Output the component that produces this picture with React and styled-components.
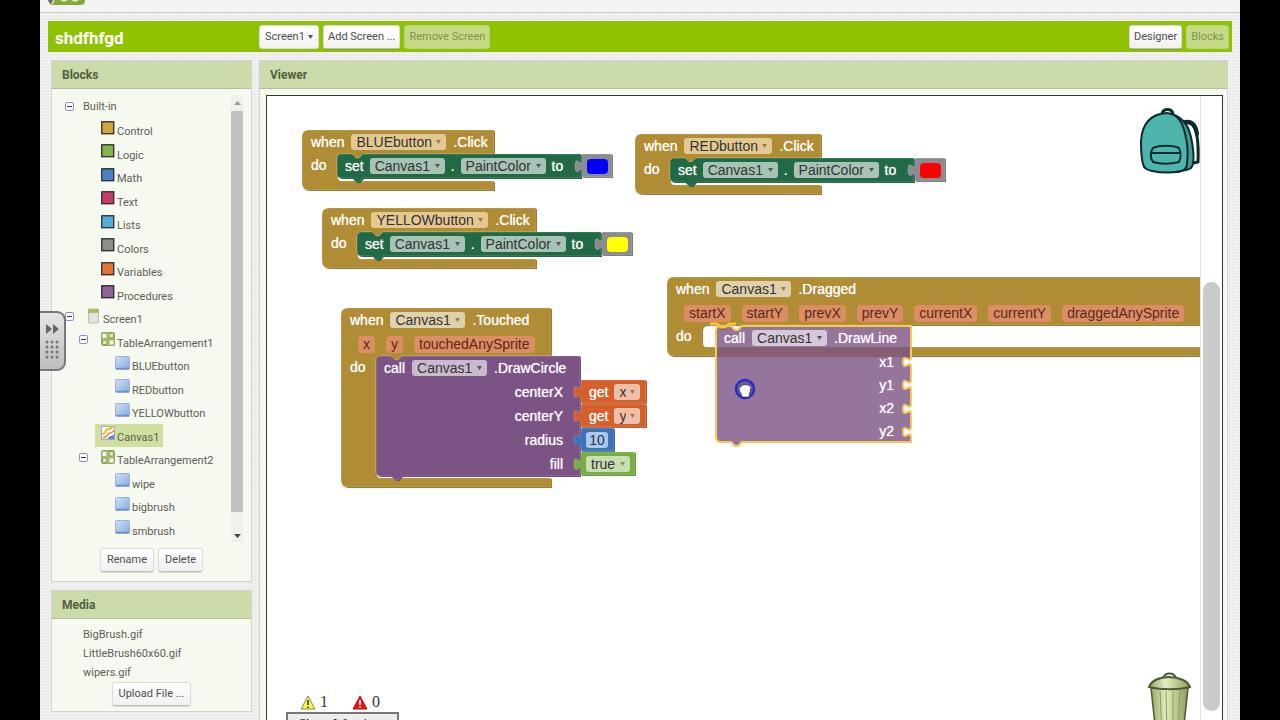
import React from 'react';
import styled, { createGlobalStyle } from 'styled-components';

const GlobalStyle = createGlobalStyle`
  * {
    box-sizing: border-box;
  }

  body {
    margin: 0;
    background: #000;
    font-family: Roboto, sans-serif;
    font-size: 11px;
    color: #5c6057;
  }

  svg {
    display: block;
  }

  button,
  select {
    font-family: inherit;
    margin: 0;
  }

  ul {
    list-style: none;
    margin: 0;
    padding: 0;
  }
`;

const GOLD = '#b08c34';
const GREEN = '#226a46';
const PURPLE = '#7c5385';
const ORANGE = '#d6602b';
const BLUE = '#3d71b8';
const LIME = '#78ad42';
const GRAY = '#8b8c91';

const Shell = styled.div`
  position: relative;
  height: 100vh;
  margin: 0 40px;
  overflow: hidden;
  background-color: #e9e9e9;
  background-image: repeating-linear-gradient(0deg, rgba(255, 255, 255, 0.35) 0 1px, transparent 1px 3px),
    repeating-linear-gradient(90deg, rgba(255, 255, 255, 0.35) 0 1px, transparent 1px 3px);
`;

const TopStrip = styled.header`
  height: 13px;
  padding-left: 8px;
  background: #f3f3f3;
  border-bottom: 1px solid #cfcfcf;
`;

const ProjectBar = styled.div`
  display: flex;
  align-items: center;
  height: 31px;
  margin: 8px 8px 0;
  padding: 0 3px 0 7px;
  background: #8fc202;
`;

const ProjectName = styled.h1`
  flex: 0 0 204px;
  margin: 0;
  padding-top: 3px;
  font-size: 17px;
  line-height: 24px;
  font-weight: 700;
  color: #fff;
`;

const BarGroup = styled.div`
  display: flex;
  gap: 4px;
  margin-left: ${props => (props.$end ? 'auto' : '0')};
`;

const Button = styled.button`
  height: 24px;
  padding: 0 ${props => (props.$small ? '4px' : '6px')};
  font-size: 11px;
  line-height: 20px;
  white-space: nowrap;
  color: #4f4f4f;
  background: linear-gradient(#fff, #f1f1f1);
  border: 1px solid #dcdcdc;
  border-bottom-color: #bfbfbf;
  border-radius: 3px;
  box-shadow: 0 1px 1px rgba(0, 0, 0, 0.12);

  &:disabled {
    color: #7d9453;
    background: #c4da85;
    border-color: #b9d36f;
    box-shadow: none;
  }
`;

const ScreenPicker = styled.label`
  display: flex;
  align-items: center;
  gap: 3px;
  height: 24px;
  padding: 0 5px;
  background: linear-gradient(#fff, #f1f1f1);
  border: 1px solid #dcdcdc;
  border-radius: 3px;

  select {
    height: 20px;
    padding: 0;
    font-size: 11px;
    color: #4f4f4f;
    background: none;
    border: 0;
    appearance: none;
  }
`;

const Columns = styled.main`
  display: flex;
  align-items: flex-start;
  gap: 7px;
  padding: 8px 12px 0 11px;
`;

const Sidebar = styled.aside`
  display: flex;
  flex: 0 0 201px;
  flex-direction: column;
  gap: 8px;
`;

const Panel = styled.section`
  flex: ${props => (props.$grow ? '1' : 'none')};
  min-width: 0;
  background: #f6f9f0;
  border: 1px solid #d2d6ca;
`;

const PanelTitle = styled.h2`
  margin: 0;
  padding: 0 10px;
  height: 28px;
  font-size: 12px;
  line-height: 28px;
  font-weight: 700;
  color: #52603f;
  background: #cbdba9;
  border-bottom: 1px solid #b4bda2;
`;

const TreeArea = styled.div`
  display: flex;
  height: 454px;
  padding: 6px 8px 0 0;
`;

const Tree = styled.div`
  flex: 1;
`;

const TreeList = styled.ul`
  display: flex;
  flex-direction: column;
  height: 423px;
`;

const TreeRow = styled.li`
  display: flex;
  flex: 1;
  align-items: center;
  height: 23px;
  padding-left: ${props => 13 + props.$depth * 14}px;
`;

const RootRow = styled.div`
  display: flex;
  align-items: center;
  gap: 9px;
  height: 22px;
  margin-bottom: 1px;
  padding-left: 13px;
`;

const Toggle = styled.button`
  flex: none;
  width: 9px;
  height: 9px;
  padding: 0;
  background: #fff;
  border: 1px solid #8b8fc4;
  border-radius: 2px;

  &::after {
    content: '';
    display: block;
    width: 5px;
    height: 1px;
    margin: 0 auto;
    background: #30308a;
  }
`;

const ToggleSlot = styled.span`
  display: flex;
  flex: 0 0 9px;
  margin-right: 7px;
  padding-bottom: 3px;
`;

const Node = styled.span`
  display: flex;
  align-items: center;
  align-self: stretch;
  gap: 2px;
  padding: 0 4px 0 6px;
  background: ${props => (props.$selected ? '#cfdf9f' : 'transparent')};

  svg {
    margin-bottom: 4px;
  }

  span {
    padding-top: 4px;
  }
`;

const ScrollBar = styled.div`
  display: flex;
  flex: 0 0 12px;
  flex-direction: column;
  align-items: center;
  justify-content: space-between;
  height: 447px;
  padding: 6px 0 4px;
  background: #f0f1ef;
`;

const ScrollThumb = styled.div`
  width: 12px;
  height: 401px;
  margin: 6px 0 auto;
  background: #c1c2c1;
`;

const ButtonRow = styled.div`
  display: flex;
  justify-content: center;
  gap: 4px;
  padding: ${props => (props.$tight ? '0 0 5px' : '5px 0 9px')};
`;

const FileList = styled.ul`
  padding: 6px 31px 0;

  li {
    height: 19px;
    line-height: 19px;
  }
`;

const Workspace = styled.div`
  display: flex;
  min-height: 660px;
  margin: 6px 4px 6px 6px;
  background: #fff;
  border: 1px solid #333;
`;

const Surface = styled.div`
  position: relative;
  flex: 1;
  min-width: 0;
  overflow: hidden;
  font-family: 'Liberation Sans', sans-serif;
  font-size: 14px;
`;

const SurfaceScroll = styled.div`
  flex: 0 0 22px;
  padding: 186px 2px 0;
  border-left: 1px solid #e4e4e4;

  div {
    height: 429px;
    border-radius: 9px;
    background: #cacaca;
  }
`;

const TopBlock = styled.div`
  position: absolute;
  left: ${props => props.$x}px;
  top: ${props => props.$y}px;
`;

const BlockBox = styled.div`
  position: relative;
  display: flex;
  flex: none;
  flex-direction: column;
  width: ${props => props.$w}px;
  height: ${props => props.$h}px;
  color: #fff;
`;

const Shape = styled.svg`
  position: absolute;
  left: 0;
  top: 0;
  width: 100%;
  height: 100%;
  overflow: visible;
`;

const BlockRow = styled.div`
  position: relative;
  display: flex;
  flex: 0 0 24px;
  align-items: center;
  gap: ${props => (props.$gap || 7)}px;
  padding-left: ${props => (props.$indent || 8)}px;
  white-space: nowrap;
`;

const ArgRow = styled(BlockRow)`
  flex: 1;
  justify-content: flex-end;
  padding-right: 17px;
`;

const Word = styled.span`
  line-height: 16px;
  text-shadow: 0 0 1px rgba(255, 255, 255, 0.8);
`;

const Mouth = styled.div`
  position: relative;
  display: flex;
`;

const DoWord = styled(Word)`
  flex: 0 0 35px;
  padding-left: 9px;
  line-height: 22px;
`;

const Attached = styled.div`
  display: flex;
  gap: 1px;
`;

const Outputs = styled.div`
  display: flex;
  flex-direction: column;
  padding-top: ${props => (props.$skip || 0)}px;
`;

const Field = styled.label`
  display: flex;
  align-items: center;
  gap: 4px;
  height: 16px;
  padding: 0 5px;
  border-radius: 3px;
  background: ${props => props.$tint || 'rgba(255, 255, 255, 0.6)'};

  select {
    height: 16px;
    padding: 0;
    font-family: inherit;
    font-size: 14px;
    line-height: 16px;
    color: #333;
    background: none;
    border: 0;
    appearance: none;
  }
`;

const NumberField = styled.input`
  width: 22px;
  height: 16px;
  padding: 0;
  font-family: inherit;
  font-size: 14px;
  text-align: center;
  color: #333;
  background: #a9c8f0;
  border: 0;
  border-radius: 3px;
`;

const Param = styled.span`
  height: 17px;
  padding: 0 5px;
  line-height: 16px;
  color: #58291a;
  background: #dd8d64;
  border-radius: 4px;
`;

const Swatch = styled.span`
  width: 21px;
  height: 15px;
  border-radius: 4px;
  background: ${props => props.$color};
`;

const Floating = styled.div`
  position: absolute;
  ${props => props.$place}
`;

const Counts = styled.div`
  display: flex;
  align-items: center;
  gap: 4px;
  height: 20px;
  padding-left: 14px;
  font-family: 'Liberation Serif', serif;
  font-size: 16px;
  color: #333;

  svg + span {
    width: 28px;
  }
`;

const WarningsButton = styled.button`
  width: 113px;
  height: 25px;
  font-family: 'Liberation Serif', serif;
  font-size: 14px;
  color: #222;
  background: #ededed;
  border: 2px solid #777;
`;

const DrawerHandle = styled.button`
  position: absolute;
  left: 0;
  top: 311px;
  width: 26px;
  height: 60px;
  padding: 0;
  background: linear-gradient(#e6e6e6, #bdbdbd);
  border: 2px solid #777;
  border-left: 0;
  border-radius: 0 9px 9px 0;
`;

const Caret = ({ color = '#555' }) => (
  <svg width="5" height="4" viewBox="0 0 5 4" aria-hidden="true">
    <path d="M0 0h5L2.5 4z" fill={color} />
  </svg>
);

const Dropdown = ({ value, tint, caret }) => (
  <Field $tint={tint}>
    <select aria-label={value} defaultValue={value}>
      <option>{value}</option>
    </select>
    <Caret color={caret} />
  </Field>
);

const NOTCH_DOWN = 'l4 4h3l4 -4';
const NOTCH_UP = 'l-4 4h-3l-4 -4';

const statementPath = (w, h, sockets = []) => {
  const right = sockets.map(y => `V${y}c0 8 -8 -5 -8 5s8 -3 8 5`).join('');
  return `M0 5Q0 0 5 0H15${NOTCH_DOWN}H${w}${right}V${h}H26${NOTCH_UP}H5Q0 ${h} 0 ${h - 5}Z`;
};

const eventPath = (w, h, head, foot) => {
  const end = h - foot;
  return `M0 7Q0 0 7 0H${w}V${head}H61${NOTCH_UP}H40Q35 ${head} 35 ${head + 5}V${end - 5}Q35 ${end} 40 ${end}H${w}V${h}H7Q0 ${h} 0 ${h - 7}Z`;
};

const outputPath = (w, h) => `M0 0H${w}V${h}H0V18c0 -9 -7 7 -7 -6s7 3 7 -6Z`;

const BlockShape = ({ d, color }) => (
  <Shape aria-hidden="true">
    <path d={d} fill={color} transform="translate(1 1)" style={{ filter: 'brightness(0.8)' }} />
    <path d={d} fill={color} />
    <path d={d} fill="none" stroke="#fff" strokeOpacity="0.2" />
  </Shape>
);

const OutputBlock = ({ width, color, indent = 5, children }) => (
  <BlockBox $w={width} $h={24}>
    <BlockShape d={outputPath(width, 23)} color={color} />
    <BlockRow $indent={indent} $gap={6}>{children}</BlockRow>
  </BlockBox>
);

const EventBlock = ({ x, y, width, component, event, params, bodyHeight, tint, children }) => {
  const head = params ? 48 : 24;
  const height = head + bodyHeight + 9;
  return (
    <TopBlock $x={x} $y={y}>
      <BlockBox $w={width} $h={height}>
        <BlockShape d={eventPath(width, height, head, 9)} color={GOLD} />
        <BlockRow $indent={9}>
          <Word>when</Word>
          <Dropdown value={component} tint={tint} caret="#a07c3c" />
          <Word>.{event}</Word>
        </BlockRow>
        {params && (
          <BlockRow $indent={17} $gap={11}>
            {params.map(name => (
              <Param key={name}>{name}</Param>
            ))}
          </BlockRow>
        )}
        <Mouth>
          <DoWord>do</DoWord>
          {children}
        </Mouth>
      </BlockBox>
    </TopBlock>
  );
};

const SetColorBlock = ({ color }) => (
  <Attached>
    <BlockBox $w={244} $h={24}>
      <BlockShape d={statementPath(244, 24)} color={GREEN} />
      <BlockRow $gap={6}>
        <Word>set</Word>
        <Dropdown value="Canvas1" />
        <Word>.</Word>
        <Dropdown value="PaintColor" />
        <Word>to</Word>
      </BlockRow>
    </BlockBox>
    <OutputBlock width={30} color={GRAY}>
      <Swatch $color={color} />
    </OutputBlock>
  </Attached>
);

const ClickBlock = ({ color, ...rest }) => (
  <EventBlock event="Click" bodyHeight={27} tint="#e3c892" {...rest}>
    <SetColorBlock color={color} />
  </EventBlock>
);

const DrawCircleBlock = () => (
  <Attached>
    <BlockBox $w={204} $h={120}>
      <BlockShape d={statementPath(204, 120)} color={PURPLE} />
      <BlockRow>
        <Word>call</Word>
        <Dropdown value="Canvas1" />
        <Word>.DrawCircle</Word>
      </BlockRow>
      {['centerX', 'centerY', 'radius', 'fill'].map(arg => (
        <ArgRow key={arg}>
          <Word>{arg}</Word>
        </ArgRow>
      ))}
    </BlockBox>
    <Outputs $skip={24}>
      {['x', 'y'].map(name => (
        <OutputBlock key={name} width={65} color={ORANGE} indent={8}>
          <Word>get</Word>
          <Dropdown value={name} caret="#b5705a" />
        </OutputBlock>
      ))}
      <OutputBlock width={33} color={BLUE}>
        <NumberField defaultValue="10" aria-label="radius" />
      </OutputBlock>
      <OutputBlock width={54} color={LIME}>
        <Dropdown value="true" caret="#7d9a60" />
      </OutputBlock>
    </Outputs>
  </Attached>
);

const DrawLineBlock = () => {
  const d = statementPath(195, 116, [31, 54, 78, 101]);
  return (
    <TopBlock $x={449} $y={230}>
      <BlockBox $w={195} $h={117}>
        <Shape aria-hidden="true">
          <path d={d} fill={PURPLE} fillOpacity="0.8" stroke="#f6c95a" strokeWidth="2" />
          <path d="M-6 -2h7l4 3h4l4 -3h7" fill="none" stroke="#f7c531" strokeWidth="3" />
        </Shape>
        <BlockRow>
          <Word>call</Word>
          <Dropdown value="Canvas1" />
          <Word>.DrawLine</Word>
        </BlockRow>
        {['x1', 'y1', 'x2', 'y2'].map(arg => (
          <ArgRow key={arg}>
            <Word>{arg}</Word>
          </ArgRow>
        ))}
      </BlockBox>
    </TopBlock>
  );
};

const SquareIcon = ({ color }) => (
  <svg width="14" height="14" viewBox="0 0 14 14">
    <rect x=".75" y=".75" width="12" height="12" fill={color} stroke="#222" strokeWidth="1.2" />
  </svg>
);

const ScreenIcon = () => (
  <svg width="14" height="16" viewBox="0 0 14 16">
    <rect x="1.5" y="1" width="10" height="14" rx="1" fill="#e3e4df" stroke="#b9bbb2" />
    <path d="M1 1h11v4H1z" fill="#a9bd6c" />
  </svg>
);

const TableIcon = () => (
  <svg width="14" height="14" viewBox="0 0 14 14">
    <rect x=".5" y=".5" width="13" height="13" rx="1" fill="#a9bd78" stroke="#97a86c" />
    <rect x="1.5" y="2" width="4" height="4" rx="1" fill="#f2f5e6" />
    <rect x="8" y="1.5" width="4.5" height="4.5" rx="1" fill="#dfe9c2" stroke="#7f9c3c" />
    <rect x="1.5" y="8" width="4.5" height="4.5" rx="1" fill="#dfe9c2" stroke="#7f9c3c" />
    <rect x="8.5" y="8.5" width="4" height="4" rx="1" fill="#f2f5e6" />
  </svg>
);

const ButtonIcon = () => (
  <svg width="15" height="14" viewBox="0 0 15 14">
    <defs>
      <linearGradient id="btn" x1="0" y1="0" x2="1" y2="1">
        <stop offset="0" stopColor="#cfe0f7" />
        <stop offset="1" stopColor="#86abe0" />
      </linearGradient>
    </defs>
    <rect x=".5" y=".5" width="14" height="13" rx="1" fill="url(#btn)" stroke="#9fb2d0" />
    <path d="M1 12.5h13" stroke="#6c8fc4" strokeWidth="1.5" />
  </svg>
);

const CanvasIcon = () => (
  <svg width="14" height="14" viewBox="0 0 14 14">
    <rect x=".5" y=".5" width="13" height="13" fill="#fdfdf5" stroke="#a7a9c4" />
    <path d="M1 8c4 1 3-5 6-5 3 0 3-1 5-2" fill="none" stroke="#eeb832" strokeWidth="2" />
    <path d="M2 12c4 0 4-5 7-5 2 0 3-1 4-3" fill="none" stroke="#e08a4c" strokeWidth="1.5" />
    <path d="M5 13c3 0 3-3 5-3 1 0 2-1 3-2v5z" fill="#5b84c9" />
  </svg>
);

const TREE = [
  { label: 'Control', depth: 1, color: '#cfa63d' },
  { label: 'Logic', depth: 1, color: '#82b34c' },
  { label: 'Math', depth: 1, color: '#4a80c4' },
  { label: 'Text', depth: 1, color: '#c73b6b' },
  { label: 'Lists', depth: 1, color: '#55acd9' },
  { label: 'Colors', depth: 1, color: '#8d8d8d' },
  { label: 'Variables', depth: 1, color: '#e0743a' },
  { label: 'Procedures', depth: 1, color: '#8f6397' },
  { label: 'Screen1', depth: 0, icon: ScreenIcon, open: true },
  { label: 'TableArrangement1', depth: 1, icon: TableIcon, open: true },
  { label: 'BLUEbutton', depth: 2, icon: ButtonIcon },
  { label: 'REDbutton', depth: 2, icon: ButtonIcon },
  { label: 'YELLOWbutton', depth: 2, icon: ButtonIcon },
  { label: 'Canvas1', depth: 1, icon: CanvasIcon, selected: true },
  { label: 'TableArrangement2', depth: 1, icon: TableIcon, open: true },
  { label: 'wipe', depth: 2, icon: ButtonIcon },
  { label: 'bigbrush', depth: 2, icon: ButtonIcon },
  { label: 'smbrush', depth: 2, icon: ButtonIcon }
];

const FILES = ['BigBrush.gif', 'LittleBrush60x60.gif', 'wipers.gif'];

const BlockTree = () => (
  <TreeArea>
    <Tree>
      <RootRow>
        <Toggle aria-label="Collapse Built-in" />
        <span>Built-in</span>
      </RootRow>
      <TreeList>
        {TREE.map(({ label, depth, color, icon: Icon = SquareIcon, open, selected }) => (
          <TreeRow key={label} $depth={depth}>
            <ToggleSlot>{open && <Toggle aria-label={`Collapse ${label}`} />}</ToggleSlot>
            <Node $selected={selected}>
              <Icon color={color} />
              <span>{label}</span>
            </Node>
          </TreeRow>
        ))}
      </TreeList>
    </Tree>
    <ScrollBar>
      <svg width="7" height="4" viewBox="0 0 7 4">
        <path d="M0 4h7L3.500 0z" fill="#999" />
      </svg>
      <ScrollThumb />
      <svg width="7" height="4" viewBox="0 0 7 4">
        <path d="M0 0h7L3.500 4z" fill="#444" />
      </svg>
    </ScrollBar>
  </TreeArea>
);

const Backpack = () => (
  <svg width="60" height="66" viewBox="0 0 60 66" aria-label="Backpack">
    <g stroke="#0d2b2c" strokeLinejoin="round" strokeLinecap="round">
      <path d="M46 15c10-2 13 14 12 39l-5 1" fill="#fff" strokeWidth="3" />
      <path d="M45 14c8-1 11 4 12 12" fill="none" strokeWidth="4" />
      <path d="M22 6c1-6 10-6 11 0" fill="none" strokeWidth="3" />
      <path d="M30 6c17 3 21 18 23 35 1 9 1 16-2 19-3 2-9 3-14 4z" fill="#3f9f97" strokeWidth="2" />
      <path d="M27 5C10 6 2 17 1 33c0 9 0 16 2 23 1 5 5 6 9 7 10 2 20 2 29 0 4-1 6-3 6-7 1-9 1-18-1-26C43 14 38 6 27 5z" fill="#4db5ab" strokeWidth="2" />
      <path d="M13 40c6-3 20-3 26 0 2 4 2 10 0 14-8 2-19 2-26 0-3-4-3-10 0-14zM11 45h29" fill="none" strokeWidth="2" />
    </g>
  </svg>
);

const Trash = () => (
  <svg width="46" height="64" viewBox="0 0 46 64" aria-label="Trash">
    <defs>
      <linearGradient id="can">
        <stop offset="0" stopColor="#94a767" />
        <stop offset=".4" stopColor="#e2edbe" />
        <stop offset="1" stopColor="#8b9e5c" />
      </linearGradient>
    </defs>
    <path d="M4 16h37l-5 46H9z" fill="url(#can)" stroke="#4f5b35" strokeWidth="1.500" />
    <path d="M13 19l2 42M19 19l1 42M26 19v42M33 19l-2 42" stroke="#8b9a62" />
    <path d="M2 15C4 9 12 5 22 5s19 4 21 10c-12 3-29 3-41 0z" fill="url(#can)" stroke="#4f5b35" strokeWidth="2" />
    <path d="M16 6c2-6 11-6 13 0" fill="none" stroke="#4f5b35" strokeWidth="2" />
  </svg>
);

const AlertIcon = ({ fill, stroke, mark }) => (
  <svg width="16" height="15" viewBox="0 0 16 15">
    <path d="M8 1l7 13H1z" fill={fill} stroke={stroke} strokeLinejoin="round" />
    <path d="M8 5v5M8 11.500v1.500" stroke={mark} strokeWidth="1.700" />
  </svg>
);

const GrabCursor = () => (
  <svg width="22" height="22" viewBox="0 0 22 22">
    <circle cx="11" cy="11" r="9" fill="#6c59a0" stroke="#2a2acb" strokeWidth="2.500" />
    <path d="M5 10q0-2 2-1 0-3 3-2 1-1 2 0 2-1 3 1 2-1 2 1l-1 5q-1 2-1 5H8q0-3-2-5z" fill="#fff" stroke="#222" strokeWidth=".6" />
  </svg>
);

const App = () => (
  <>
    <GlobalStyle />
    <Shell>
      <TopStrip>
        <svg width="38" height="6" viewBox="0 0 38 6">
          <path d="M0 0h37c0 4-2 5-5 5H5C2 5 1 3 0 0z" fill="#86a83c" />
          <path d="M0 0h6L4 4Q1 3 0 0z" fill="#6f6a70" />
          <path d="M6 0L4 4M13 0q3 2 6 0M24 0q3 2 6 0" fill="none" stroke="#e8efd6" strokeWidth="1.500" />
        </svg>
      </TopStrip>
      <ProjectBar>
        <ProjectName>shdfhfgd</ProjectName>
        <BarGroup>
          <ScreenPicker>
            <select aria-label="Screen" defaultValue="Screen1">
              <option>Screen1</option>
            </select>
            <Caret />
          </ScreenPicker>
          <Button $small>Add Screen ...</Button>
          <Button $small disabled>Remove Screen</Button>
        </BarGroup>
        <BarGroup $end>
          <Button $small>Designer</Button>
          <Button $small disabled>Blocks</Button>
        </BarGroup>
      </ProjectBar>
      <Columns>
        <Sidebar>
          <Panel>
            <PanelTitle>Blocks</PanelTitle>
            <BlockTree />
            <ButtonRow>
              <Button>Rename</Button>
              <Button>Delete</Button>
            </ButtonRow>
          </Panel>
          <Panel>
            <PanelTitle>Media</PanelTitle>
            <FileList>
              {FILES.map(file => (
                <li key={file}>{file}</li>
              ))}
            </FileList>
            <ButtonRow $tight>
              <Button>Upload File ...</Button>
            </ButtonRow>
          </Panel>
        </Sidebar>
        <Panel $grow>
          <PanelTitle>Viewer</PanelTitle>
          <Workspace>
            <Surface>
              <ClickBlock x={35} y={34} width={192} component="BLUEbutton" color="#0000ff" />
              <ClickBlock x={368} y={38} width={186} component="REDbutton" color="#ff0000" />
              <ClickBlock x={55} y={112} width={214} component="YELLOWbutton" color="#ffff00" />
              <EventBlock
                x={74}
                y={212}
                width={210}
                component="Canvas1"
                event="Touched"
                params={['x', 'y', 'touchedAnySprite']}
                bodyHeight={122}
              >
                <DrawCircleBlock />
              </EventBlock>
              <EventBlock
                x={400}
                y={181}
                width={620}
                component="Canvas1"
                event="Dragged"
                params={['startX', 'startY', 'prevX', 'prevY', 'currentX', 'currentY', 'draggedAnySprite']}
                bodyHeight={22}
              />
              <DrawLineBlock />
              <Floating $place={{ left: '467px', top: '282px' }}>
                <GrabCursor />
              </Floating>
              <Floating $place={{ right: '0', top: '12px' }}>
                <Backpack />
              </Floating>
              <Floating $place={{ right: '7px', bottom: '18px' }}>
                <Trash />
              </Floating>
              <Floating $place={{ left: '19px', bottom: '17px' }}>
                <Counts>
                  <AlertIcon fill="#f3f55a" stroke="#8d8f3a" mark="#444" />
                  <span>1</span>
                  <AlertIcon fill="#ea1414" stroke="#c01010" mark="#fff" />
                  <span>0</span>
                </Counts>
                <WarningsButton>Show Warnings</WarningsButton>
              </Floating>
            </Surface>
            <SurfaceScroll>
              <div />
            </SurfaceScroll>
          </Workspace>
        </Panel>
      </Columns>
      <DrawerHandle aria-label="Open drawer">
        <svg width="24" height="56" viewBox="0 0 24 56">
          <path d="M6 11l6 5-6 5zM13 11l6 5-6 5z" fill="#666" />
          {[0, 1, 2, 3].map(row =>
            [0, 1, 2].map(col => (
              <circle key={`${row}-${col}`} cx={7 + col * 5} cy={29 + row * 5} r="1.500" fill="#777" />
            ))
          )}
        </svg>
      </DrawerHandle>
    </Shell>
  </>
);

export default App;
